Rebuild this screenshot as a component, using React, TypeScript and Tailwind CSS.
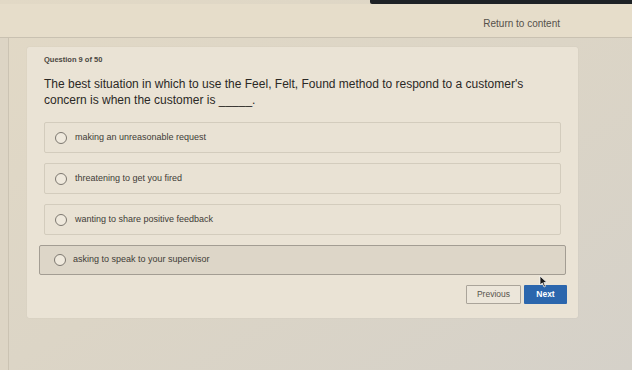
const options = [
  "making an unreasonable request",
  "threatening to get you fired",
  "wanting to share positive feedback",
  "asking to speak to your supervisor",
];

function Cursor() {
  return (
    <svg width="9" height="13" viewBox="0 0 9 13" className="absolute left-[539px] top-[275px]">
      <path d="M1 1 L1 10 L3.3 8 L5 12 L6.5 11.3 L4.8 7.6 L8 7.6 Z" fill="#1a1a1a" stroke="#f4f4f4" strokeWidth="0.8" />
    </svg>
  );
}

export default function App() {
  return (
    <div className="relative w-[632px] h-[370px] overflow-hidden bg-gradient-to-br from-[#e2d9c6] via-[#dcd5c6] to-[#d5d1c9] font-['Liberation_Sans',Arial,sans-serif] text-[#3a3834]">
      <div className="flex justify-end h-[4px]">
        <div className="w-[262px] bg-[#1e2226] rounded-bl-[2px]" />
      </div>
      <header className="h-[34px] flex items-start justify-end pr-[72px] pt-[12px] bg-[#e6ddca] border-b border-[#c9c1b1]">
        <a className="text-[10px] text-[#55514b]">Return to content</a>
      </header>

      <div className="flex h-[332px]">
        <div className="w-[9px] bg-[#ddd5c5] border-r border-[#cbc3b3]" />
        <main className="pl-[18px] pt-[9px]">
          <section className="w-[551px] h-[271px] bg-[#eae3d5] rounded-[2px] shadow-[0_0_1px_rgba(0,0,0,0.12)] px-[17px] pt-[8px]">
            <p className="text-[7.5px] leading-[9px] font-bold text-[#4a4741]">Question 9 of 50</p>
            <h2 className="mt-[12px] text-[12px] leading-[16px] text-[#2a2825]">
              The best situation in which to use the Feel, Felt, Found method to respond to a customer's concern is when the customer is _____.
            </h2>

            <div className="mt-[14px] flex flex-col gap-[10px]">
              {options.map((text, i) => {
                const selected = i === 3;
                return (
                  <label
                    key={text}
                    className={
                      selected
                        ? "flex items-center h-[30px] -mx-[5px] px-[14px] gap-[7px] bg-[#ddd6c8] border border-[#a39d93] rounded-[2px]"
                        : "flex items-center h-[31px] px-[10px] gap-[8px] bg-[#e9e2d4] border border-[#d3ccbd] rounded-[2px]"
                    }
                  >
                    <span className="w-[12px] h-[12px] rounded-full border border-[#7d7870] bg-[#efe9dd]" />
                    <span className="text-[9px] text-[#3f3c37]">{text}</span>
                  </label>
                );
              })}
            </div>

            <div className="mt-[10px] flex justify-end gap-[3px] -mr-[6px]">
              <button className="w-[55px] h-[19px] border border-[#aaa49a] bg-[#ece6da] text-[8.5px] text-[#57534c] rounded-[1px]">
                Previous
              </button>
              <button className="w-[43px] h-[19px] bg-[#2b66ad] text-[8.5px] font-bold text-white rounded-[1px]">
                Next
              </button>
            </div>
          </section>
        </main>
      </div>
      <Cursor />
    </div>
  );
}
